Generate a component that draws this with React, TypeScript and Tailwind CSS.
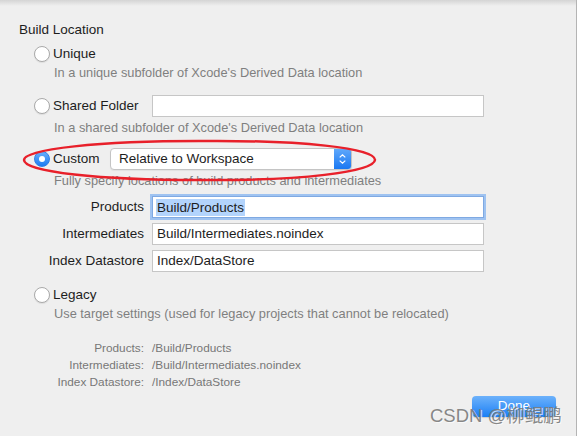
import React from "react";

type RadioProps = { checked?: boolean };

function Radio({ checked = false }: RadioProps) {
  if (checked) {
    return (
      <span className="flex h-[16px] w-[16px] shrink-0 items-center justify-center rounded-full border border-[#2f7fe6] bg-[linear-gradient(to_bottom,#68aefb,#1c7cf3)]">
        <span className="h-[6px] w-[6px] rounded-full bg-white" />
      </span>
    );
  }
  return (
    <span className="h-[16px] w-[16px] shrink-0 rounded-full border border-[#a9a9a9] bg-white shadow-[0_1px_1px_rgba(0,0,0,0.08)]" />
  );
}

function Desc({ children }: { children: React.ReactNode }) {
  return (
    <div className="ml-[35px] h-[14px] whitespace-nowrap text-[12.8px] leading-[14px] text-[#7f7f7f]">
      {children}
    </div>
  );
}

const fields = [
  { label: "Products", value: "Build/Products", focused: true },
  { label: "Intermediates", value: "Build/Intermediates.noindex" },
  { label: "Index Datastore", value: "Index/DataStore" },
];

const info = [
  { label: "Products:", value: "/Build/Products" },
  { label: "Intermediates:", value: "/Build/Intermediates.noindex" },
  { label: "Index Datastore:", value: "/Index/DataStore" },
];

export default function App() {
  return (
    <div className="relative h-[436px] w-[577px] overflow-hidden border-r border-[#b4b4b4] bg-[linear-gradient(to_bottom,#d4d4d4_0px,#efefef_6px)] font-['Liberation_Sans',Arial,sans-serif] text-[13.5px] text-[#1d1d1d]">
      <div className="pl-[19px] pt-[22px]">
        <div className="h-[16px] leading-[16px]">Build Location</div>

        {/* Unique */}
        <div className="ml-[15px] mt-[8px] flex h-[16px] items-center gap-[3px] leading-[16px]">
          <Radio />
          <span>Unique</span>
        </div>
        <div className="mt-[4px]">
          <Desc>In a unique subfolder of Xcode's Derived Data location</Desc>
        </div>

        {/* Shared folder */}
        <div className="ml-[15px] mt-[15px] flex h-[22px] items-center">
          <div className="flex w-[118px] items-center gap-[3px]">
            <Radio />
            <span>Shared Folder</span>
          </div>
          <div className="h-[22px] w-[332px] border border-[#c6c6c6] bg-white" />
        </div>
        <div className="mt-[4px]">
          <Desc>In a shared subfolder of Xcode's Derived Data location</Desc>
        </div>

        {/* Custom */}
        <div className="ml-[15px] mt-[13px] flex h-[22px] items-center">
          <div className="flex w-[76px] items-center gap-[3px]">
            <Radio checked />
            <span>Custom</span>
          </div>
          <div className="flex h-[22px] w-[242px] items-stretch rounded-[4px] border border-[#c4c4c4] bg-white shadow-[0_1px_1px_rgba(0,0,0,0.06)]">
            <div className="flex flex-1 items-center pl-[8px]">Relative to Workspace</div>
            <div className="flex w-[17px] flex-col items-center justify-center gap-[2px] rounded-r-[3px] bg-[linear-gradient(to_bottom,#5fa8fb,#1a78f2)]">
              <svg width="7" height="4" viewBox="0 0 7 4" fill="none">
                <path d="M0.7 3.4 L3.5 0.8 L6.3 3.4" stroke="white" strokeWidth="1.2" />
              </svg>
              <svg width="7" height="4" viewBox="0 0 7 4" fill="none">
                <path d="M0.7 0.6 L3.5 3.2 L6.3 0.6" stroke="white" strokeWidth="1.2" />
              </svg>
            </div>
          </div>
        </div>
        <div className="mt-[4px]">
          <Desc>Fully specify locations of build products and intermediates</Desc>
        </div>

        {/* Custom paths */}
        <div className="mt-[8px] grid grid-cols-[125px_332px] gap-x-[8px] gap-y-[5px]">
          {fields.map((f) => (
            <React.Fragment key={f.label}>
              <div className="flex h-[22px] items-center justify-end whitespace-nowrap">{f.label}</div>
              <div
                className={`flex h-[22px] items-center bg-white pl-[3px] ${
                  f.focused
                    ? "border border-[#7fa9e2] shadow-[0_0_0_2px_#9fc3f1]"
                    : "border border-[#c6c6c6]"
                }`}
              >
                {f.focused ? (
                  <span className="bg-[#b3d4fc] px-[1px] leading-[17px]">{f.value}</span>
                ) : (
                  <span className="px-[1px]">{f.value}</span>
                )}
              </div>
            </React.Fragment>
          ))}
        </div>

        {/* Legacy */}
        <div className="ml-[15px] mt-[15px] flex h-[16px] items-center gap-[3px] leading-[16px]">
          <Radio />
          <span>Legacy</span>
        </div>
        <div className="mt-[4px]">
          <Desc>Use target settings (used for legacy projects that cannot be relocated)</Desc>
        </div>

        {/* Legacy info */}
        <div className="mt-[19px] grid grid-cols-[125px_auto] gap-x-[8px] text-[11.8px] leading-[17px] text-[#777777]">
          {info.map((i) => (
            <React.Fragment key={i.label}>
              <div className="whitespace-nowrap text-right">{i.label}</div>
              <div>{i.value}</div>
            </React.Fragment>
          ))}
        </div>

        <div className="mt-[5px] flex justify-end pr-[20px]">
          <button className="h-[21px] w-[84px] rounded-[4px] bg-[linear-gradient(to_bottom,#6db2fb,#1b7ff5)] pb-[2px] text-[13.5px] leading-[17px] text-white shadow-[0_1px_1px_rgba(0,0,0,0.15)]">
            Done
          </button>
        </div>
      </div>

      {/* red annotation ellipse */}
      <svg className="pointer-events-none absolute left-0 top-0" width="577" height="436">
        <path
          d="M199 141 C 300 140, 376 148, 375 160 C 374 172, 300 181, 199 180 C 100 180, 24 172, 24 160 C 24 149, 100 141, 199 141 Z"
          fill="none"
          stroke="#e8202a"
          strokeWidth="2.5"
        />
      </svg>

      {/* watermark */}
      <div className="pointer-events-none absolute left-[430px] top-[405px] font-['Liberation_Sans','Noto_Sans_CJK_SC',sans-serif] text-[18.5px] leading-[22px] text-[#7c7c7c] opacity-90 [text-shadow:1px_1px_0_rgba(255,255,255,0.8)]">
        CSDN @柳鲲鹏
      </div>
    </div>
  );
}
